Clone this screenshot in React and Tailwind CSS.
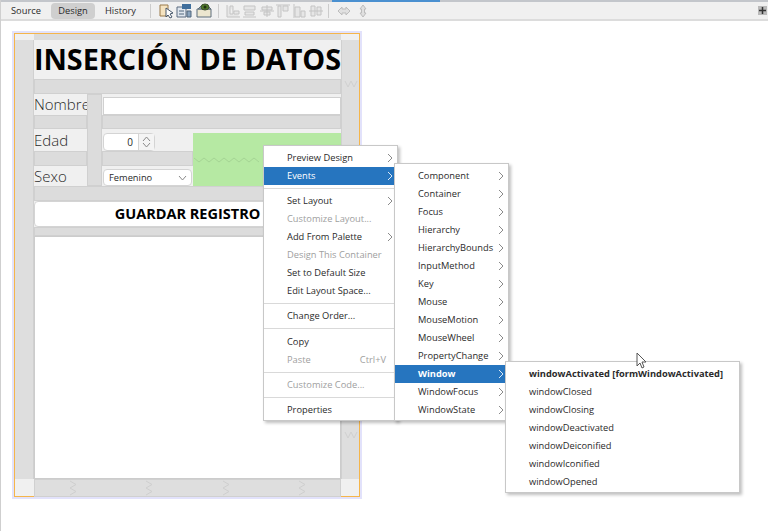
const F = { fontFamily: '"Open Sans","Noto Sans",sans-serif' };

function Chevron({ color = "#8a8a8a" }) {
  return (
    <svg width="6" height="10" viewBox="0 0 6 10" className="shrink-0">
      <path d="M1 1l4 4-4 4" fill="none" stroke={color} strokeWidth="1" />
    </svg>
  );
}

function Item({ label, sub, dis, sel, right, bold }) {
  const c = sel ? "bg-[#2675bf] text-white" : dis ? "text-[#a0a0a0]" : "text-[#2a2a2a]";
  return (
    <div className={`flex h-[18px] items-center justify-between pl-[23px] pr-[4px] text-[9.3px] leading-none ${c} ${bold ? "font-bold" : ""}`}>
      <span className="whitespace-nowrap">{label}</span>
      {right && <span className="pr-[7px] text-[#a0a0a0]">{right}</span>}
      {sub && <Chevron color={sel ? "#dbe9f6" : "#8a8a8a"} />}
    </div>
  );
}

const Sep = () => <div className="my-[3px] h-[1px] bg-[#d9d9d9]" />;

function Zig({ v, className }) {
  return v ? (
    <svg width="10" height="16" viewBox="0 0 10 16" className={className}>
      <path d="M2 1l6 3.500-6 3.500 6 3.500-6 3.500" fill="none" stroke="#cfcfcf" />
    </svg>
  ) : (
    <svg width="14" height="8" viewBox="0 0 14 8" className={className}>
      <path d="M1 1l3 6 3-6 3 6 3-6" fill="none" stroke="#d0d0d0" />
    </svg>
  );
}

const Gap = ({ className = "" }) => <div className={`border border-[#d0d0d0] bg-[#dcdcdc] ${className}`} />;

function ToolIcon({ children }) {
  return <svg width="16" height="16" viewBox="0 0 16 16" className="shrink-0">{children}</svg>;
}

const alignPaths = [
  "M1 2v12h13M4 3h3v8H4zM8 8h5v3H8z",
  "M1 14h13M2 3h11v4H2zM3 9h9v3H3z",
  "M1 8h14M8 2v12M3 4h10v3H3zM5 9h6v3H5z",
  "M1 2h14M3 3h3v11H3zM8 3h5v5H8z",
  "M2 1v14M3 4h5v10H3zM9 8h4v6H9z",
  "M1 8h14M3 3h4v10H3zM9 4h4v8H9z",
];

export default function App() {
  return (
    <div style={F} className="relative h-[531px] w-[768px] overflow-hidden border-l border-[#cfcfcf] bg-white text-[#2a2a2a]">
      <div className="h-[2px] w-full bg-[#c3c6cb]">
        <div className="ml-[331px] h-[2px] w-[108px] bg-[#4a90d0]" />
      </div>
      <div className="flex h-[19px] items-center border-b-2 border-[#dcdcdc] bg-[#f0f0f0] text-[9.3px] leading-none">
        <span className="ml-[10px] w-[40px]">Source</span>
        <span className="flex h-[16px] w-[44px] items-center justify-center rounded-sm bg-[#cfcfcf]">Design</span>
        <span className="ml-[10px] w-[32px]">History</span>
        <div className="ml-[13px] h-[14px] w-px bg-[#cccccc]" />
        <div className="ml-[8px] flex items-center gap-[1px]">
          <ToolIcon>
            <path d="M1 2h8v11H1z" fill="#f5e3c0" stroke="#9a7a4a" />
            <path d="M7 5l7 5-3 1 2 3-2 1-2-3-2 2z" fill="#fff" stroke="#46566a" />
          </ToolIcon>
          <ToolIcon>
            <path d="M1 4h9v10H1z" fill="#dfe6ee" stroke="#5a6b80" />
            <path d="M6 1h9v5H6z" fill="#3f6e9c" />
            <path d="M11 8h4v6h-4z" fill="#8aa3bd" stroke="#51667c" />
            <path d="M3 8h5M3 11h5" stroke="#51667c" />
          </ToolIcon>
          <span className="w-[2px]" />
          <ToolIcon>
            <path d="M1 6h14v8H1z" fill="#ece6cf" stroke="#5f6f7c" />
            <path d="M2 6l3-3h7l3 3z" fill="#8fa8b5" stroke="#5f6f7c" />
            <ellipse cx="9" cy="4" rx="4" ry="3" fill="#4f7a2a" stroke="#3d4f30" />
            <circle cx="9" cy="4" r="1.500" fill="#1f3012" />
          </ToolIcon>
        </div>
        <div className="ml-[6px] h-[14px] w-px bg-[#cccccc]" />
        <div className="ml-[7px] flex items-center gap-[0.4px]">
          {alignPaths.map((d) => (
            <ToolIcon key={d}><path d={d} fill="#e6e6e6" stroke="#c4c4c4" /></ToolIcon>
          ))}
        </div>
        <div className="ml-[4px] h-[14px] w-px bg-[#cccccc]" />
        <div className="ml-[8px] flex items-center gap-[8px]">
          <svg width="14" height="10" viewBox="0 0 14 10"><path d="M1 5l4-4v2h4V1l4 4-4 4V7H5v2z" fill="#e0e0e0" stroke="#bdbdbd" /></svg>
          <svg width="8" height="14" viewBox="0 0 8 14"><path d="M4 1l3 4H5.500v4H7l-3 4-3-4h1.500V5H1z" fill="#e0e0e0" stroke="#bdbdbd" /></svg>
        </div>
        <div className="ml-auto mr-[1px] flex h-[9px] w-[9px] items-center justify-center bg-[#b9b9b9]">
          <svg width="7" height="7" viewBox="0 0 7 7"><path d="M3.500 0v7M0 3.500h7" stroke="#333" strokeWidth="1.500" /></svg>
        </div>
      </div>

      {/* form designer */}
      <div className="ml-[11px] mt-[10px] h-[468px] w-[350px] border-2 border-[#e2e2fb]">
        <div
          className="grid h-full border border-[#f5b54a] bg-[#f0f0f0]"
          style={{ gridTemplateColumns: "19px 53px 15px 91px 148px 1fr", gridTemplateRows: "6px 39px 15px 21px 14px 22px 15px 20px 15px 26px 9px 243px 1fr" }}
        >
          <div />
          <Gap className="col-span-4 border-0 bg-[#d8d8d8]" />
          <div />

          <Gap className="row-span-11 border-y-0 border-l-0 bg-[#dedede]" />
          <div className="col-span-4 flex items-center justify-center overflow-hidden whitespace-nowrap text-[28.8px] font-bold leading-none text-black">
            INSERCIÓN DE DATOS
          </div>
          <div className="row-span-11 flex flex-col items-center justify-between border-l border-[#d0d0d0] bg-[#dedede] py-[40px]">
            <Zig />
            <Zig />
          </div>

          <Gap className="col-span-4" />

          <div className="flex items-center text-[15px] font-light leading-none">Nombre</div>
          <Gap className="row-span-5" />
          <div className="col-span-2 ml-[1px] mt-[3px] border border-[#d0d0d0] bg-white" />

          <Gap className="col-span-1 col-start-2 row-start-5" />
          <Gap className="col-span-2 col-start-4 row-start-5" />

          <div className="col-start-2 row-start-6 flex items-center pt-[1px] text-[15px] font-light leading-none">Edad</div>
          <div className="col-start-4 row-start-6 flex items-end">
            <div className="ml-[1px] flex h-[18px] w-[52px] items-center rounded-sm border border-[#d4d4d4] bg-white text-[10px] leading-none">
              <span className="w-[34px] pr-[5px] text-right">0</span>
              <span className="flex h-full w-[16px] flex-col items-center justify-center border-l border-[#d4d4d4] bg-[#f4f4f4]">
                <svg width="9" height="12" viewBox="0 0 9 12"><path d="M1 5l3.500-4 3.500 4M1 7l3.500 4 3.500-4" fill="none" stroke="#8a8a8a" /></svg>
              </span>
            </div>
          </div>
          <div className="col-start-5 row-start-6 row-span-3 mt-[4px] flex items-center justify-center bg-[#b6e9a3]">
            <svg width="146" height="8" viewBox="0 0 146 8">
              <path d="M0 2l5 4 5-4 5 4 5-4 5 4 5-4 5 4 5-4 5 4 5-4 5 4 5-4 5 4" fill="none" stroke="#a5d494" />
            </svg>
          </div>

          <Gap className="col-start-2 row-start-7" />
          <Gap className="col-start-4 row-start-7" />

          <div className="col-start-2 row-start-8 flex items-center text-[15px] font-light leading-none">Sexo</div>
          <div className="col-start-4 row-start-8 flex items-end">
            <div className="ml-[1px] flex h-[17px] w-[89px] items-center justify-between rounded-sm border border-[#d4d4d4] bg-white pl-[5px] pr-[4px] text-[9.3px] leading-none">
              <span>Femenino</span>
              <svg width="9" height="6" viewBox="0 0 9 6"><path d="M1 1l3.500 4L8 1" fill="none" stroke="#8a8a8a" /></svg>
            </div>
          </div>

          <Gap className="col-span-4 col-start-2 row-start-9" />

          <div className="col-span-4 col-start-2 row-start-10 flex items-center justify-center rounded-sm border border-[#d4d4d4] bg-white pt-[1px] text-[14.500px] font-bold leading-none text-black">
            GUARDAR REGISTRO
          </div>

          <Gap className="col-span-4 col-start-2 row-start-11" />

          <div className="col-span-4 col-start-2 row-start-12 border border-[#cccccc] bg-white" />

          <div className="col-start-1 row-start-13" />
          <div className="col-span-4 col-start-2 row-start-13 flex items-center justify-around border border-[#d0d0d0] bg-[#dedede]">
            <Zig v />
            <Zig v />
            <Zig v />
            <Zig v />
          </div>
          <div className="col-start-6 row-start-13" />
        </div>
      </div>

      {/* context menus */}
      <div className="absolute left-[262px] top-[145px] w-[135px] border border-[#c8c8c8] bg-white pb-[1px] pt-[3px] shadow-[2px_2px_3px_rgba(0,0,0,0.25)]">
        <Item label="Preview Design" sub />
        <Item label="Events" sub sel />
        <Sep />
        <Item label="Set Layout" sub />
        <Item label="Customize Layout..." dis />
        <Item label="Add From Palette" sub />
        <Item label="Design This Container" dis />
        <Item label="Set to Default Size" />
        <Item label="Edit Layout Space..." />
        <Sep />
        <Item label="Change Order..." />
        <div className="mb-[4px] mt-[3px] h-[1px] bg-[#d9d9d9]" />
        <Item label="Copy" />
        <Item label="Paste" dis right="Ctrl+V" />
        <Sep />
        <Item label="Customize Code..." dis />
        <Sep />
        <Item label="Properties" />
      </div>

      <div className="absolute left-[393px] top-[163px] w-[115px] border border-[#c8c8c8] bg-white pb-[1px] pt-[3px] shadow-[2px_2px_3px_rgba(0,0,0,0.25)]">
        {["Component","Container","Focus","Hierarchy","HierarchyBounds","InputMethod","Key","Mouse","MouseMotion","MouseWheel","PropertyChange"].map((l) => (
          <Item key={l} label={l} sub />
        ))}
        <Item label="Window" sub sel bold />
        <Item label="WindowFocus" sub />
        <Item label="WindowState" sub />
      </div>

      <div className="absolute left-[504px] top-[361px] w-[235px] border border-[#c8c8c8] bg-white pb-[1px] pt-[3px] shadow-[2px_2px_3px_rgba(0,0,0,0.25)]">
        <Item label="windowActivated [formWindowActivated]" bold />
        {["windowClosed","windowClosing","windowDeactivated","windowDeiconified","windowIconified","windowOpened"].map((l) => (
          <Item key={l} label={l} />
        ))}
      </div>

      <svg width="12" height="17" viewBox="0 0 12 17" className="absolute left-[635px] top-[352px]">
        <path d="M1 1v13l3-3 2 5 2-1-2-5h4z" fill="#fff" stroke="#555" />
      </svg>
    </div>
  );
}
